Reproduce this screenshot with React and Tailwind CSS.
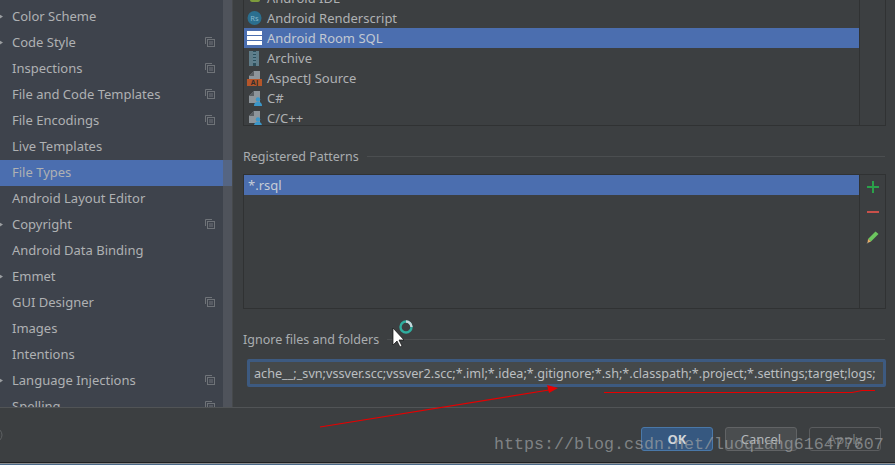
const NAV = [
  ["Color Scheme", true, false],
  ["Code Style", true, true],
  ["Inspections", false, true],
  ["File and Code Templates", false, true],
  ["File Encodings", false, true],
  ["Live Templates", false, false],
  ["File Types", false, false, true],
  ["Android Layout Editor", false, false],
  ["Copyright", true, true],
  ["Android Data Binding", false, false],
  ["Emmet", true, false],
  ["GUI Designer", false, true],
  ["Images", false, false],
  ["Intentions", false, false],
  ["Language Injections", true, true],
  ["Spelling", false, true],
];

function CopyIcon() {
  return (
    <svg width="10" height="10" viewBox="0 0 10 10" fill="none" stroke="#6f7378" strokeWidth="1" className="shrink-0">
      <path d="M0.5 7V0.5H7" />
      <rect x="2.5" y="2.5" width="7" height="7" />
      <path d="M4 5H8M4 7H8" />
    </svg>
  );
}

function Arrow() {
  return (
    <svg width="5" height="5" viewBox="0 0 5 5" className="absolute left-0 top-[10px]"><path d="M-1 0L3 2.5L-1 5Z" fill="#9a9da0" /></svg>
  );
}

function FileIcon({ children }) {
  return (
    <svg width="16" height="16" viewBox="0 0 16 16" className="shrink-0">
      <path d="M7 1H13V13H2V6Z" fill="#8e959b" />
      <path d="M7 1V6H2Z" fill="#5a5f63" />
      {children}
    </svg>
  );
}

const Person = () => (
  <>
    <circle cx="11" cy="9.5" r="2.2" fill="#3b97c9" />
    <path d="M7 16C7 12.5 9 12 11 12C13 12 15 12.5 15 16Z" fill="#3b97c9" />
  </>
);

const LIST = [
  ["Android IDL", <svg width="16" height="16" viewBox="0 0 16 16" className="shrink-0"><path d="M3 1H13V10C13 11 12 12 11 12H5C4 12 3 11 3 10Z" fill="#7d9c3c" /></svg>],
  ["Android Renderscript", <svg width="16" height="16" viewBox="0 0 16 16" className="shrink-0"><circle cx="7.5" cy="8" r="7" fill="#2b6f8f" /><text x="7.5" y="10.5" textAnchor="middle" fontSize="7.5" fill="#86b8cc" fontFamily="Noto Sans, sans-serif">Rs</text></svg>],
  ["Android Room SQL", <div className="w-[15px] h-[14px] mr-[1px] shrink-0 flex flex-col justify-between"><div className="h-[4px] bg-white" /><div className="h-[4px] bg-white" /><div className="h-[4px] bg-white" /></div>, true],
  ["Archive", <svg width="16" height="16" viewBox="0 0 16 16" className="shrink-0"><rect x="2" y="1" width="10" height="15" fill="#5f7c88" /><rect x="6" y="1" width="3" height="15" fill="#2d4f5c" /><path d="M6 3H9M6 6H9M6 9H9M6 12H9" stroke="#8fb4c4" strokeWidth="1" /></svg>],
  ["AspectJ Source", <svg width="16" height="16" viewBox="0 0 16 16" className="shrink-0"><path d="M7 1H13V9H2V6Z" fill="#8e959b" /><path d="M7 1V6H2Z" fill="#5a5f63" /><rect x="0" y="9" width="15" height="7" fill="#b5562a" /><text x="7.5" y="15.2" textAnchor="middle" fontSize="7" fontWeight="700" fill="#2f2f2f" fontFamily="Noto Sans, sans-serif">AJ</text></svg>],
  ["C#", <FileIcon><Person /></FileIcon>],
  ["C/C++", <FileIcon><Person /></FileIcon>],
];

function Title({ children }) {
  return (
    <div className="flex items-center gap-[8px] h-[18px]">
      <span className="text-[#a9adb0] text-[12.5px] pt-[2px]">{children}</span>
      <div className="flex-1 h-px bg-[#4b4e50] mr-px" />
    </div>
  );
}

export default function App() {
  return (
    <div className="relative w-[895px] h-[465px] overflow-hidden bg-[#3c3f41] text-[13px] leading-[18px] text-[#afb1b3]" style={{ fontFamily: '"Noto Sans", sans-serif' }}>
      <div className="flex h-[407px]">
        <aside className="w-[232px] shrink-0 relative overflow-hidden bg-[#3e434c] pt-[4px]">
          {NAV.map(([label, arrow, copy, selected]) => (
            <div key={label} className={`relative h-[26px] flex items-center pl-[12px] pr-[17px] ${selected ? "bg-[#4b6eaf]" : ""}`}>
              {arrow && <Arrow />}
              <span className="flex-1 pb-[2px]">{label}</span>
              {copy && <span className="-mt-[2px]"><CopyIcon /></span>}
            </div>
          ))}
          <div className="absolute right-0 top-0 bottom-0 w-[9px] bg-[#5c5f66]/60" />
        </aside>
        <main className="flex-1 min-w-0 border-l border-[#46494b] pl-[10px] pr-[9px]">
          <div className="flex h-[126px] border-b border-r border-[#303233] border-l overflow-hidden">
            <div className="flex-1 -mt-[12px]">
              {LIST.map(([label, icon, sel]) => (
                <div key={label} className={`h-[20px] flex items-center gap-[4px] pl-[3px] ${sel ? "bg-[#4b6eaf] text-[#c2c8d2]" : ""}`}>
                  {icon}
                  <span>{label}</span>
                </div>
              ))}
            </div>
            <div className="w-[26px] border-l border-[#303233]" />
          </div>
          <div className="mt-[21px]"><Title>Registered Patterns</Title></div>
          <div className="flex h-[135px] mt-[9px] border border-[#303233]">
            <div className="flex-1">
              <div className="h-[20px] bg-[#4b6eaf] pl-[4px] flex items-center text-[#c6ccd6]">*.rsql</div>
            </div>
            <div className="w-[26px] border-l border-[#303233] flex flex-col items-center pt-[6px] gap-[13px]">
              <svg width="12" height="12" viewBox="0 0 12 12"><path d="M5 0H7V5H12V7H7V12H5V7H0V5H5Z" fill="#2aa24a" /></svg>
              <svg width="12" height="12" viewBox="0 0 12 12"><rect x="0" y="5" width="12" height="2" fill="#c9504a" /></svg>
              <svg width="13" height="13" viewBox="0 0 13 13"><path d="M9.5 0.5L12.5 3L5 10.5L2 8Z" fill="#6cc65f" /><path d="M2 8L5 10.5L1.5 12Z" fill="#e8b06a" /><path d="M1.5 11L2.5 12L0.5 12.5Z" fill="#8a8a8a" /></svg>
            </div>
          </div>
          <div className="mt-[21px]"><Title>Ignore files and folders</Title></div>
          <div className="mt-[11px] ml-[4px] h-[28px] border-[3px] border-[#3d5a80] bg-[#45494a] rounded-[2px] flex items-center px-[4px] overflow-hidden whitespace-nowrap text-[12.65px] text-[#bbbfc1]">
            ache__;_svn;vssver.scc;vssver2.scc;*.iml;*.idea;*.gitignore;*.sh;*.classpath;*.project;*.settings;target;logs;
          </div>
        </main>
      </div>
      <footer className="h-[55px] border-t border-[#515456] flex justify-end items-start gap-[12px] pt-[19px] pr-[14px]">
        <button className="w-[72px] h-[24px] rounded-[3px] border border-[#4a78a8] bg-[#365880] font-bold text-[#d0d4d8]">OK</button>
        <button className="w-[72px] h-[24px] rounded-[3px] border border-[#616365] bg-[#4a4d4f] text-[#b4b8ba]">Cancel</button>
        <button className="w-[72px] h-[24px] rounded-[3px] border border-[#5a5c5e] text-[#777a7c]">Apply</button>
      </footer>
      <div className="h-[1px] bg-[#1f2021]" />
      <div className="h-[1px] bg-[#8a8d90]" />
      <div className="h-[1px] bg-[#4a6a8a]" />

      <svg width="895" height="465" className="absolute inset-0 pointer-events-none">
        <path d="M320 427L552 389.5" stroke="#e60000" strokeWidth="1.2" />
        <path d="M558 388L547 385L549 393Z" fill="#e60000" />
        <path d="M604 392.5H852L862 390.5H875" stroke="#e60000" strokeWidth="1.2" fill="none" />
        <circle cx="-5" cy="435" r="7" fill="none" stroke="#5d6062" strokeWidth="1" />
        <circle cx="406" cy="327" r="5.5" fill="none" stroke="#2fae9f" strokeWidth="2.4" />
        <path d="M406 321.5A5.5 5.5 0 0 1 411.5 327" fill="none" stroke="#c7d6da" strokeWidth="2.4" />
        <path d="M393 328V345L397 341L400 347L402 346L399 340H404Z" fill="#ffffff" stroke="#111" strokeWidth="0.7" />
      </svg>
      <div className="absolute left-[494px] top-[435px] text-[16.67px] leading-[20px] text-[#9ea1a3]/70 whitespace-nowrap pointer-events-none" style={{ fontFamily: '"Liberation Mono", monospace' }}>
        https://blog.csdn.net/luoqiang616477607
      </div>
    </div>
  );
}
